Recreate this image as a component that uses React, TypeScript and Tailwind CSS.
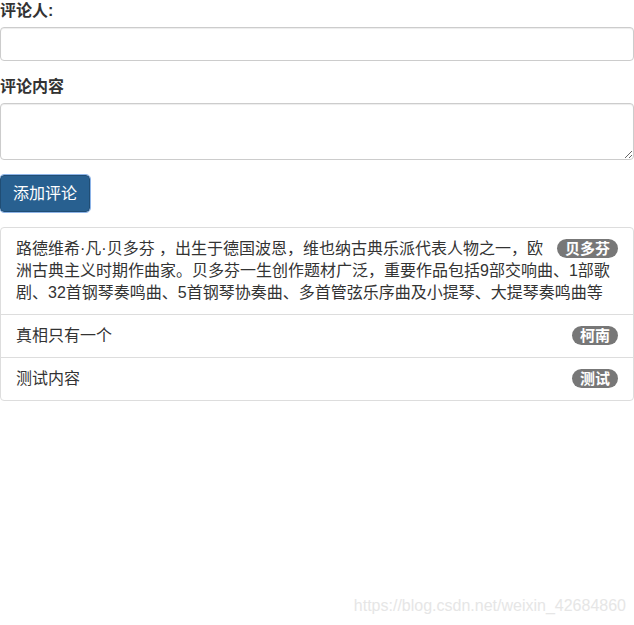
const COMMENTS = [
  {
    user: '贝多芬',
    content:
      '路德维希·凡·贝多芬 ，出生于德国波恩，维也纳古典乐派代表人物之一，欧洲古典主义时期作曲家。贝多芬一生创作题材广泛，重要作品包括9部交响曲、1部歌剧、32首钢琴奏鸣曲、5首钢琴协奏曲、多首管弦乐序曲及小提琴、大提琴奏鸣曲等',
  },
  { user: '柯南', content: '真相只有一个' },
  { user: '测试', content: '测试内容' },
]

export default function App() {
  return (
    <div
      className="relative min-h-[625px] bg-white text-[16px] leading-[22px] text-[#333]"
      style={{ fontFamily: '"Liberation Sans", "Noto Sans CJK SC", sans-serif' }}
    >
      {/* form */}
      <div className="mb-[15px]">
        <label className="mb-[5px] block font-bold">评论人:</label>
        <input
          type="text"
          className="block h-[34px] w-full rounded-[4px] border border-[#ccc] px-3 shadow-[inset_0_1px_1px_rgba(0,0,0,0.075)] outline-none"
        />
      </div>
      <div className="mb-[15px]">
        <label className="mb-[5px] block font-bold">评论内容</label>
        <textarea
          rows={2}
          className="block h-[57px] w-full rounded-[4px] border border-[#ccc] px-3 py-[6px] shadow-[inset_0_1px_1px_rgba(0,0,0,0.075)] outline-none"
        />
      </div>
      <button
        type="button"
        className="block h-[37px] rounded-[4px] border border-[#204d74] bg-[#286090] px-[12px] text-[16px] leading-[22px] text-white outline outline-1 outline-[#8db4e8]"
      >
        添加评论
      </button>

      {/* comment list */}
      <ul className="mt-[15px] rounded-[4px] border border-[#ddd]">
        {COMMENTS.map((c, i) => (
          <li
            key={i}
            className={`px-[15px] py-[10px] ${i > 0 ? 'border-t border-[#ddd]' : ''}`}
          >
            <span className="float-right ml-[8px] mt-[1px] rounded-full bg-[#777] px-[8px] py-[2px] text-[15px] leading-[15px] font-bold text-white">
              {c.user}
            </span>
            {c.content}
          </li>
        ))}
      </ul>

      <span className="absolute right-[8px] top-[596px] text-[16px] leading-[20px] text-[#e6e6e6]">
        https://blog.csdn.net/weixin_42684860
      </span>
    </div>
  )
}
